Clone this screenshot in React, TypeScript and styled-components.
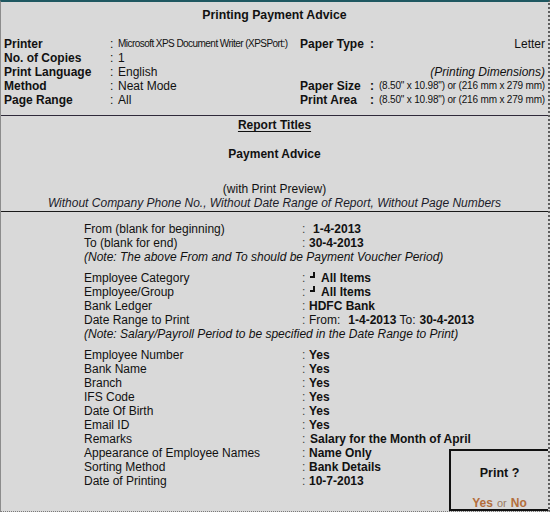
import React from 'react';
import styled, { createGlobalStyle } from 'styled-components';

const GlobalStyle = createGlobalStyle`
  html, body {
    margin: 0;
    padding: 0;
    background: #d9d9d9;
  }
  body {
    font-family: "Liberation Sans", Arial, sans-serif;
    font-size: 12px;
    color: #111;
  }
`;

const Frame = styled.div`
  position: relative;
  box-sizing: border-box;
  width: 550px;
  height: 512px;
  background: #d9d9d9;
  border-top: 2px solid #1f5861;
  border-left: 1px solid #8c8c8c;
  border-right: 2px dotted #5e5e5e;
  border-bottom: 1px dotted #7a7a7a;
  overflow: hidden;
`;

const Header = styled.section`
  padding: 6px 3px 8px 3px;
  border-bottom: 1px solid #2f2a3a;
`;

const Title = styled.div`
  text-align: center;
  font-weight: bold;
  font-size: 12.3px;
  line-height: 14px;
  margin-bottom: 15px;
`;

const HeaderGrid = styled.div`
  display: grid;
  grid-template-columns: 296px minmax(0, 1fr);
`;

const Column = styled.div`
  display: flex;
  flex-direction: column;
  min-width: 0;
`;

const InfoRow = styled.div<{ $label: number }>`
  display: grid;
  grid-template-columns: ${(p) => p.$label}px 8px minmax(0, 1fr);
  height: 14px;
  line-height: 14px;
  white-space: nowrap;
`;

const InfoLabel = styled.span`
  font-weight: bold;
`;

const Colon = styled.span<{ $light?: boolean }>`
  color: ${(p) => (p.$light ? '#444' : '#111')};
`;

const InfoValue = styled.span<{ $small?: boolean; $spacing?: number; $right?: boolean }>`
  font-size: ${(p) => (p.$small ? '10px' : '12px')};
  letter-spacing: ${(p) => p.$spacing ?? 0}px;
  text-align: ${(p) => (p.$right ? 'right' : 'left')};
`;

const EmptyRow = styled.div`
  height: 14px;
`;

const RightNote = styled.div`
  height: 14px;
  line-height: 14px;
  text-align: right;
  font-style: italic;
`;

const Titles = styled.section`
  padding: 2px 0 1px;
  border-bottom: 1px solid #1a1a1a;
  display: flex;
  flex-direction: column;
  align-items: center;
`;

const TitleLine = styled.div<{ $gap?: number; $bold?: boolean; $italic?: boolean }>`
  line-height: 14px;
  margin-top: ${(p) => p.$gap ?? 0}px;
  font-weight: ${(p) => (p.$bold ? 'bold' : 'normal')};
  font-style: ${(p) => (p.$italic ? 'italic' : 'normal')};
  color: ${(p) => (p.$italic ? '#1c1c2a' : '#111')};
`;

const Underlined = styled.span`
  text-decoration: underline;
  text-decoration-thickness: 1px;
  text-underline-offset: 2px;
`;

const Details = styled.section`
  padding: 10px 0 0 83px;
  display: flex;
  flex-direction: column;
  gap: 7px;
`;

const Group = styled.div`
  display: flex;
  flex-direction: column;
`;

const DetailRow = styled.div`
  display: grid;
  grid-template-columns: 218px 7px 1fr;
  height: 14px;
  line-height: 14px;
  white-space: nowrap;
`;

const DetailValue = styled.span<{ $indent?: number }>`
  font-weight: bold;
  padding-left: ${(p) => p.$indent ?? 0}px;
`;

const Plain = styled.span<{ $after?: number }>`
  font-weight: normal;
  margin-right: ${(p) => p.$after ?? 0}px;
`;

const Note = styled.div`
  height: 14px;
  line-height: 14px;
  font-style: italic;
  white-space: nowrap;
`;

const Hook = styled.span`
  display: inline-block;
  box-sizing: border-box;
  width: 5px;
  height: 6px;
  border-right: 2px solid #111;
  border-bottom: 2px solid #111;
  vertical-align: top;
  margin: 1px 6px 0 0;
`;

const PrintBox = styled.div`
  position: absolute;
  right: -2px;
  bottom: 0;
  box-sizing: border-box;
  width: 101px;
  height: 62px;
  border: 2px solid #111;
  background: #d9d9d9;
  display: flex;
  flex-direction: column;
  align-items: center;
  padding-top: 15px;
`;

const PrintAsk = styled.div`
  font-weight: bold;
  font-size: 12.5px;
  line-height: 14px;
  margin-bottom: 16px;
`;

const Choice = styled.div`
  line-height: 14px;
  white-space: nowrap;
`;

const Option = styled.span`
  font-weight: bold;
  color: #b36e3b;
`;

const Or = styled.span`
  font-size: 11px;
  color: #9b7b62;
  margin: 0 4px;
`;

type Pair = [string, string];

const leftInfo: Pair[] = [
  ['Printer', 'Microsoft XPS Document Writer (XPSPort:)'],
  ['No. of Copies', '1'],
  ['Print Language', 'English'],
  ['Method', 'Neat Mode'],
  ['Page Range', 'All'],
];

const dimension = '(8.50" x 10.98") or (216 mm x 279 mm)';

const options: Pair[] = [
  ['Employee Number', 'Yes'],
  ['Bank Name', 'Yes'],
  ['Branch', 'Yes'],
  ['IFS Code', 'Yes'],
  ['Date Of Birth', 'Yes'],
  ['Email ID', 'Yes'],
  ['Remarks', ' Salary for the Month of April'],
  ['Appearance of Employee Names', 'Name Only'],
  ['Sorting Method', 'Bank Details'],
  ['Date of Printing', '10-7-2013'],
];

const App: React.FC = () => {
  return (
    <Frame>
      <GlobalStyle />
      <Header>
        <Title>Printing Payment Advice</Title>
        <HeaderGrid>
          <Column>
            {leftInfo.map(([label, value], i) => (
              <InfoRow key={label} $label={106}>
                <InfoLabel>{label}</InfoLabel>
                <Colon>:</Colon>
                {i === 0 ? (
                  <InfoValue $small $spacing={-0.55}>{value}</InfoValue>
                ) : (
                  <InfoValue>{value}</InfoValue>
                )}
              </InfoRow>
            ))}
          </Column>
          <Column>
            <InfoRow $label={70}>
              <InfoLabel>Paper Type</InfoLabel>
              <InfoLabel>:</InfoLabel>
              <InfoValue $right>Letter</InfoValue>
            </InfoRow>
            <EmptyRow />
            <RightNote>(Printing Dimensions)</RightNote>
            <InfoRow $label={70}>
              <InfoLabel>Paper Size</InfoLabel>
              <InfoLabel>:</InfoLabel>
              <InfoValue $small $spacing={-0.18} $right>{dimension}</InfoValue>
            </InfoRow>
            <InfoRow $label={70}>
              <InfoLabel>Print Area</InfoLabel>
              <InfoLabel>:</InfoLabel>
              <InfoValue $small $spacing={-0.18} $right>{dimension}</InfoValue>
            </InfoRow>
          </Column>
        </HeaderGrid>
      </Header>

      <Titles>
        <TitleLine $bold>
          <Underlined>Report Titles</Underlined>
        </TitleLine>
        <TitleLine $bold $gap={15}>Payment Advice</TitleLine>
        <TitleLine $gap={21}>(with Print Preview)</TitleLine>
        <TitleLine $italic>
          Without Company Phone No., Without Date Range of Report, Without Page Numbers
        </TitleLine>
      </Titles>

      <Details>
        <Group>
          <DetailRow>
            <span>From (blank for beginning)</span>
            <Colon $light>:</Colon>
            <DetailValue $indent={4}>1-4-2013</DetailValue>
          </DetailRow>
          <DetailRow>
            <span>To (blank for end)</span>
            <Colon $light>:</Colon>
            <DetailValue>30-4-2013</DetailValue>
          </DetailRow>
          <Note>(Note: The above From and To should be Payment Voucher Period)</Note>
        </Group>

        <Group>
          <DetailRow>
            <span>Employee Category</span>
            <Colon $light>:</Colon>
            <DetailValue $indent={1}>
              <Hook />
              All Items
            </DetailValue>
          </DetailRow>
          <DetailRow>
            <span>Employee/Group</span>
            <Colon $light>:</Colon>
            <DetailValue $indent={1}>
              <Hook />
              All Items
            </DetailValue>
          </DetailRow>
          <DetailRow>
            <span>Bank Ledger</span>
            <Colon $light>:</Colon>
            <DetailValue>HDFC Bank</DetailValue>
          </DetailRow>
          <DetailRow>
            <span>Date Range to Print</span>
            <Colon $light>:</Colon>
            <DetailValue>
              <Plain $after={8}>From:</Plain>
              <span>1-4-2013</span>
              <Plain $after={4}> To:</Plain>
              <span>30-4-2013</span>
            </DetailValue>
          </DetailRow>
          <Note>(Note: Salary/Payroll Period to be specified in the Date Range to Print)</Note>
        </Group>

        <Group>
          {options.map(([label, value]) => (
            <DetailRow key={label}>
              <span>{label}</span>
              <Colon $light>:</Colon>
              <DetailValue $indent={value.startsWith(' ') ? 1 : 0}>{value.trim()}</DetailValue>
            </DetailRow>
          ))}
        </Group>
      </Details>

      <PrintBox>
        <PrintAsk>Print ?</PrintAsk>
        <Choice>
          <Option>Yes</Option>
          <Or>or</Or>
          <Option>No</Option>
        </Choice>
      </PrintBox>
    </Frame>
  );
};

export default App;
